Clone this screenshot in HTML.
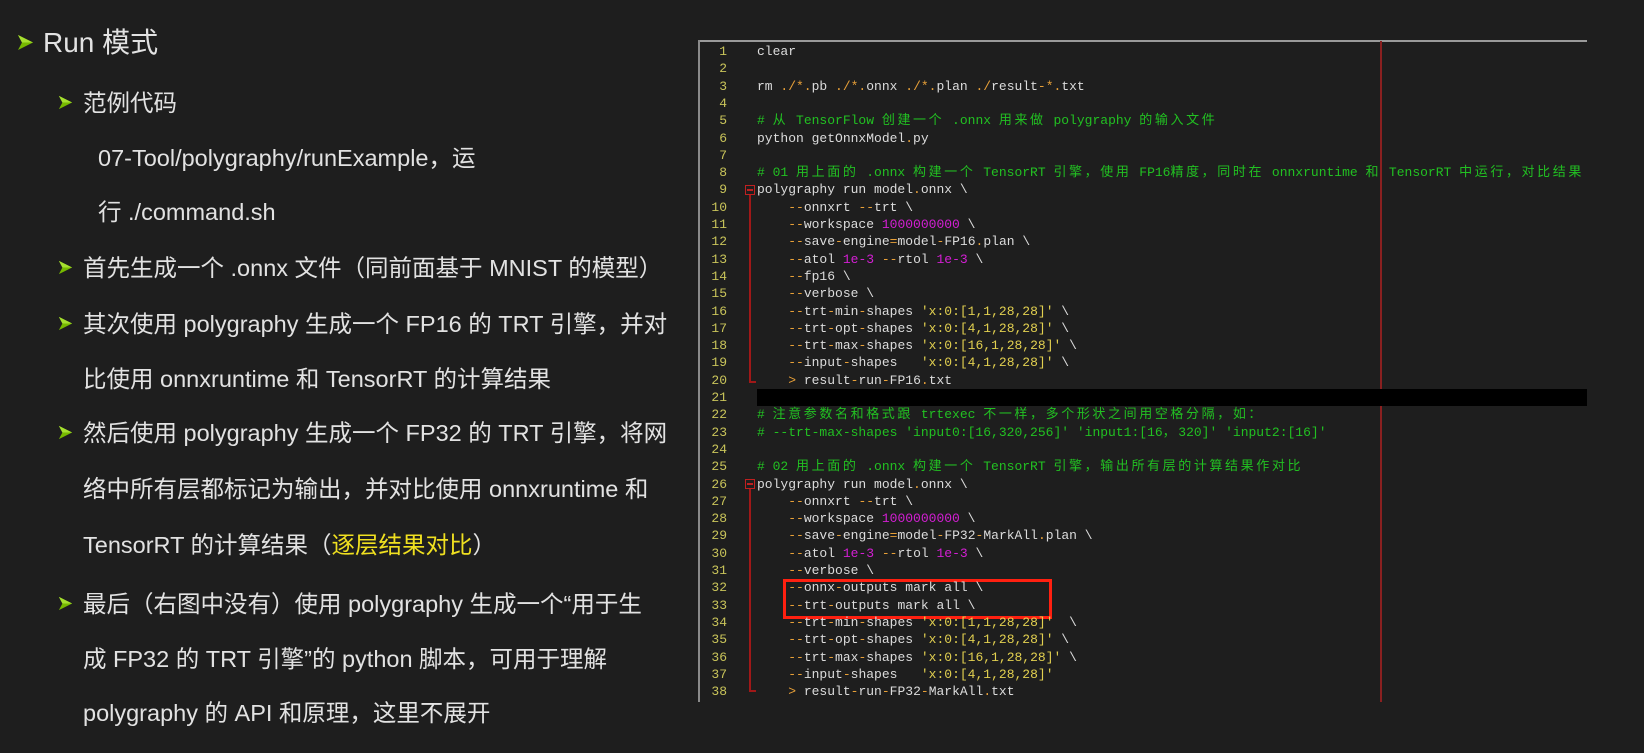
<!DOCTYPE html>
<html><head><meta charset="utf-8"><style>
*{margin:0;padding:0;box-sizing:border-box}
body{width:1644px;height:753px;background:#1e1e1e;overflow:hidden;position:relative;font-family:"Liberation Sans","Noto Sans CJK SC",sans-serif;color:#e2e2e2}
.t{position:absolute;white-space:nowrap;font-size:23.5px;line-height:30px;transform:translateY(-15px)}
.a{position:absolute;width:17px;height:17px}
.hl{color:#f0e020}
#code{position:absolute;left:698px;top:43px;font-family:"Liberation Mono","Noto Sans CJK SC",monospace;font-size:13px;line-height:17.3px;color:#dcdcdc}
.ln{position:absolute;left:0;width:29px;text-align:right;color:#c9c45a}
.cd{position:absolute;left:59px;white-space:pre}
b{font-weight:normal;color:#e8a038}
u{text-decoration:none;color:#d41ed4}
s{text-decoration:none;color:#e2d050}
em{font-style:normal;color:#22c022}
i{font-style:normal;letter-spacing:2.6px}
</style></head><body>
<svg width="0" height="0" style="position:absolute"><defs><symbol id="ar" viewBox="0 0 17 17"><path d="M1 1 L16 8.5 L1 16 L5 8.5 Z" fill="#76b900"/><path d="M1 1 L16 8.5 L5 8.5 Z" fill="#a6e030"/></symbol></defs></svg>
<svg class="a" style="left:17px;top:34px"><use href="#ar"/></svg>
<div class="t" style="left:43px;top:43px;font-size:28px">Run 模式</div>
<svg class="a" style="left:58px;top:95px;width:15px;height:15px"><use href="#ar"/></svg>
<div class="t" style="left:83px;top:103px">范例代码</div>
<div class="t" style="left:98px;top:158px">07-Tool/polygraphy/runExample，运</div>
<div class="t" style="left:98px;top:212px">行 ./command.sh</div>
<svg class="a" style="left:58px;top:260px;width:15px;height:15px"><use href="#ar"/></svg>
<div class="t" style="left:83px;top:268px">首先生成一个 .onnx 文件（同前面基于 MNIST 的模型）</div>
<svg class="a" style="left:58px;top:316px;width:15px;height:15px"><use href="#ar"/></svg>
<div class="t" style="left:83px;top:324px">其次使用 polygraphy 生成一个 FP16 的 TRT 引擎，并对</div>
<div class="t" style="left:83px;top:379px">比使用 onnxruntime 和 TensorRT 的计算结果</div>
<svg class="a" style="left:58px;top:425px;width:15px;height:15px"><use href="#ar"/></svg>
<div class="t" style="left:83px;top:433px">然后使用 polygraphy 生成一个 FP32 的 TRT 引擎，将网</div>
<div class="t" style="left:83px;top:489px">络中所有层都标记为输出，并对比使用 onnxruntime 和</div>
<div class="t" style="left:83px;top:545px">TensorRT 的计算结果（<span class="hl">逐层结果对比</span>）</div>
<svg class="a" style="left:58px;top:596px;width:15px;height:15px"><use href="#ar"/></svg>
<div class="t" style="left:83px;top:604px">最后（右图中没有）使用 polygraphy 生成一个“用于生</div>
<div class="t" style="left:83px;top:659px">成 FP32 的 TRT 引擎”的 python 脚本，可用于理解</div>
<div class="t" style="left:83px;top:713px">polygraphy 的 API 和原理，这里不展开</div>

<div style="position:absolute;left:698px;top:40px;width:889px;height:2px;background:#9a9a9a"></div>
<div style="position:absolute;left:698px;top:40px;width:2px;height:662px;background:#8a8a8a"></div>
<div style="position:absolute;left:1380px;top:41px;width:2px;height:661px;background:#8a2020"></div>
<div style="position:absolute;left:757px;top:389px;width:830px;height:17px;background:#000"></div>
<div style="position:absolute;left:745px;top:185px;width:10px;height:10px;border:1px solid #c02020"><div style="position:absolute;left:1px;top:3px;width:6px;height:2px;background:#c02020"></div></div>
<div style="position:absolute;left:749px;top:195px;width:2px;height:187px;background:#a01818"></div>
<div style="position:absolute;left:749px;top:381px;width:7px;height:2px;background:#a01818"></div>
<div style="position:absolute;left:745px;top:479px;width:10px;height:10px;border:1px solid #c02020"><div style="position:absolute;left:1px;top:3px;width:6px;height:2px;background:#c02020"></div></div>
<div style="position:absolute;left:749px;top:489px;width:2px;height:203px;background:#a01818"></div>
<div style="position:absolute;left:749px;top:690px;width:7px;height:2px;background:#a01818"></div>
<div style="position:absolute;left:783px;top:579px;width:269px;height:40px;border:3px solid #ff2010"></div>

<div id="code">
<div class="ln" style="top:0">1</div><div class="cd" style="top:0">clear</div>
<div class="ln" style="top:17.3px">2</div>
<div class="ln" style="top:34.6px">3</div><div class="cd" style="top:34.6px">rm <b>./*.</b>pb <b>./*.</b>onnx <b>./*.</b>plan <b>./</b>result<b>-*.</b>txt</div>
<div class="ln" style="top:51.9px">4</div>
<div class="ln" style="top:69.2px">5</div><div class="cd" style="top:69.2px"><em># <i>从</i> TensorFlow <i>创建一个</i> .onnx <i>用来做</i> polygraphy <i>的输入文件</i></em></div>
<div class="ln" style="top:86.5px">6</div><div class="cd" style="top:86.5px">python getOnnxModel<b>.</b>py</div>
<div class="ln" style="top:103.8px">7</div>
<div class="ln" style="top:121.1px">8</div><div class="cd" style="top:121.1px"><em># 01 <i>用上面的</i> .onnx <i>构建一个</i> TensorRT <i>引擎，使用</i> FP16<i>精度，同时在</i> onnxruntime <i>和</i> TensorRT <i>中运行，对比结果</i></em></div>
<div class="ln" style="top:138.4px">9</div><div class="cd" style="top:138.4px">polygraphy run model<b>.</b>onnx \</div>
<div class="ln" style="top:155.7px">10</div><div class="cd" style="top:155.7px">    <b>--</b>onnxrt <b>--</b>trt \</div>
<div class="ln" style="top:173px">11</div><div class="cd" style="top:173px">    <b>--</b>workspace <u>1000000000</u> \</div>
<div class="ln" style="top:190.3px">12</div><div class="cd" style="top:190.3px">    <b>--</b>save<b>-</b>engine<b>=</b>model<b>-</b>FP16<b>.</b>plan \</div>
<div class="ln" style="top:207.6px">13</div><div class="cd" style="top:207.6px">    <b>--</b>atol <u>1e-3</u> <b>--</b>rtol <u>1e-3</u> \</div>
<div class="ln" style="top:224.9px">14</div><div class="cd" style="top:224.9px">    <b>--</b>fp16 \</div>
<div class="ln" style="top:242.2px">15</div><div class="cd" style="top:242.2px">    <b>--</b>verbose \</div>
<div class="ln" style="top:259.5px">16</div><div class="cd" style="top:259.5px">    <b>--</b>trt<b>-</b>min<b>-</b>shapes <s>'x:0:[1,1,28,28]'</s> \</div>
<div class="ln" style="top:276.8px">17</div><div class="cd" style="top:276.8px">    <b>--</b>trt<b>-</b>opt<b>-</b>shapes <s>'x:0:[4,1,28,28]'</s> \</div>
<div class="ln" style="top:294.1px">18</div><div class="cd" style="top:294.1px">    <b>--</b>trt<b>-</b>max<b>-</b>shapes <s>'x:0:[16,1,28,28]'</s> \</div>
<div class="ln" style="top:311.4px">19</div><div class="cd" style="top:311.4px">    <b>--</b>input<b>-</b>shapes   <s>'x:0:[4,1,28,28]'</s> \</div>
<div class="ln" style="top:328.7px">20</div><div class="cd" style="top:328.7px">    <b>&gt;</b> result<b>-</b>run<b>-</b>FP16<b>.</b>txt</div>
<div class="ln" style="top:346px">21</div>
<div class="ln" style="top:363.3px">22</div><div class="cd" style="top:363.3px"><em># <i>注意参数名和格式跟</i> trtexec <i>不一样，多个形状之间用空格分隔，如：</i></em></div>
<div class="ln" style="top:380.6px">23</div><div class="cd" style="top:380.6px"><em># --trt-max-shapes 'input0:[16,320,256]' 'input1:[16<i>，</i>320]' 'input2:[16]'</em></div>
<div class="ln" style="top:397.9px">24</div>
<div class="ln" style="top:415.2px">25</div><div class="cd" style="top:415.2px"><em># 02 <i>用上面的</i> .onnx <i>构建一个</i> TensorRT <i>引擎，输出所有层的计算结果作对比</i></em></div>
<div class="ln" style="top:432.5px">26</div><div class="cd" style="top:432.5px">polygraphy run model<b>.</b>onnx \</div>
<div class="ln" style="top:449.8px">27</div><div class="cd" style="top:449.8px">    <b>--</b>onnxrt <b>--</b>trt \</div>
<div class="ln" style="top:467.1px">28</div><div class="cd" style="top:467.1px">    <b>--</b>workspace <u>1000000000</u> \</div>
<div class="ln" style="top:484.4px">29</div><div class="cd" style="top:484.4px">    <b>--</b>save<b>-</b>engine<b>=</b>model<b>-</b>FP32<b>-</b>MarkAll<b>.</b>plan \</div>
<div class="ln" style="top:501.7px">30</div><div class="cd" style="top:501.7px">    <b>--</b>atol <u>1e-3</u> <b>--</b>rtol <u>1e-3</u> \</div>
<div class="ln" style="top:519px">31</div><div class="cd" style="top:519px">    <b>--</b>verbose \</div>
<div class="ln" style="top:536.3px">32</div><div class="cd" style="top:536.3px">    <b>--</b>onnx<b>-</b>outputs mark all \</div>
<div class="ln" style="top:553.6px">33</div><div class="cd" style="top:553.6px">    <b>--</b>trt<b>-</b>outputs mark all \</div>
<div class="ln" style="top:570.9px">34</div><div class="cd" style="top:570.9px">    <b>--</b>trt<b>-</b>min<b>-</b>shapes <s>'x:0:[1,1,28,28]'</s>  \</div>
<div class="ln" style="top:588.2px">35</div><div class="cd" style="top:588.2px">    <b>--</b>trt<b>-</b>opt<b>-</b>shapes <s>'x:0:[4,1,28,28]'</s> \</div>
<div class="ln" style="top:605.5px">36</div><div class="cd" style="top:605.5px">    <b>--</b>trt<b>-</b>max<b>-</b>shapes <s>'x:0:[16,1,28,28]'</s> \</div>
<div class="ln" style="top:622.8px">37</div><div class="cd" style="top:622.8px">    <b>--</b>input<b>-</b>shapes   <s>'x:0:[4,1,28,28]'</s></div>
<div class="ln" style="top:640.1px">38</div><div class="cd" style="top:640.1px">    <b>&gt;</b> result<b>-</b>run<b>-</b>FP32<b>-</b>MarkAll<b>.</b>txt</div>
</div>
</body></html>
